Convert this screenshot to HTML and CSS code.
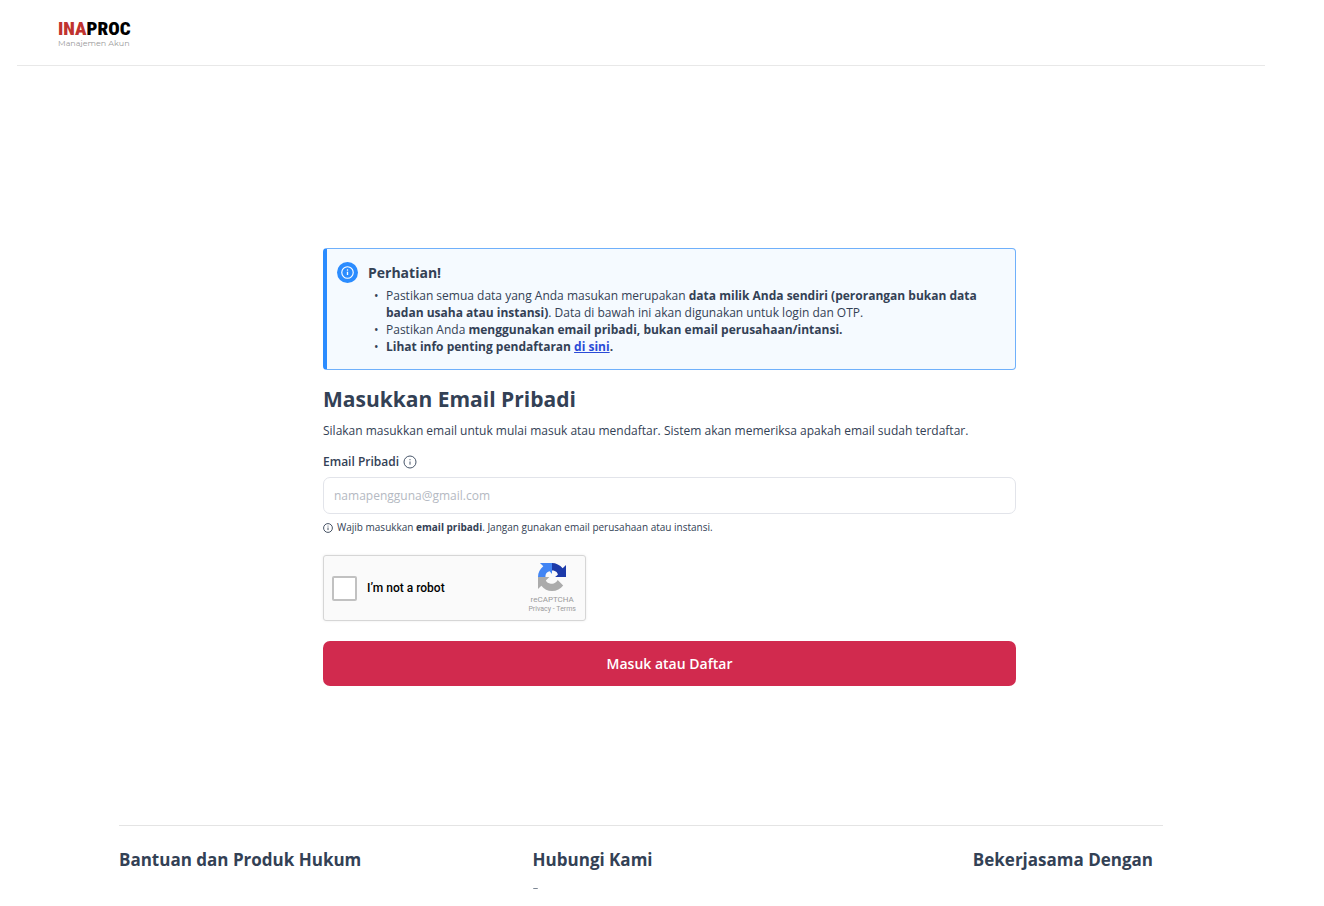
FILE: index.html
```html
<!DOCTYPE html>
<html lang="id">
<head>
<meta charset="utf-8">
<meta name="viewport" content="width=device-width, initial-scale=1">
<title>INAPROC Manajemen Akun</title>
<link rel="stylesheet" href="styles.css">
</head>
<body>
<div class="page">
  <header class="header">
    <div class="logo">
      <span class="logo-name"><span class="logo-red">INA</span>PROC</span>
      <span class="logo-sub">Manajemen Akun</span>
    </div>
  </header>

  <main class="main">
    <div class="content">
      <section class="notice">
        <svg class="notice-icon" viewBox="0 0 22 22" aria-hidden="true">
          <circle cx="11" cy="11" r="11" fill="#2b8cff"/>
          <circle cx="11" cy="11" r="6" fill="none" stroke="#fff" stroke-width="1.2"/>
          <path d="M11 10.2v3.4" stroke="#fff" stroke-width="1.4"/>
          <circle cx="11" cy="8.3" r=".8" fill="#fff"/>
        </svg>
        <div class="notice-body">
          <h2 class="notice-title">Perhatian!</h2>
          <ul class="notice-list">
            <li>Pastikan semua data yang Anda masukan merupakan <b>data milik Anda sendiri (perorangan bukan data badan usaha atau instansi)</b>. Data di bawah ini akan digunakan untuk login dan OTP.</li>
            <li>Pastikan Anda <b>menggunakan email pribadi, bukan email perusahaan/intansi.</b></li>
            <li><b>Lihat info penting pendaftaran <a class="link" href="#">di sini</a>.</b></li>
          </ul>
        </div>
      </section>

      <form class="form">
        <h1 class="title">Masukkan Email Pribadi</h1>
        <p class="lead">Silakan masukkan email untuk mulai masuk atau mendaftar. Sistem akan memeriksa apakah email sudah terdaftar.</p>

        <div class="label-row">
          <label class="label" for="email">Email Pribadi</label>
          <svg class="label-icon" viewBox="0 0 14 14" aria-hidden="true">
            <circle cx="7" cy="7" r="6" fill="none" stroke="#475569"/>
            <path d="M7 6.5v3.2" stroke="#475569"/>
            <circle cx="7" cy="4.7" r=".6" fill="#475569"/>
          </svg>
        </div>
        <input class="input" id="email" type="email" placeholder="namapengguna@gmail.com">
        <p class="hint">
          <svg class="hint-icon" viewBox="0 0 10 10" aria-hidden="true">
            <circle cx="5" cy="5" r="4.4" fill="none" stroke="#334155" stroke-width=".9"/>
            <path d="M5 4.5v2.6" stroke="#334155" stroke-width=".9"/>
            <circle cx="5" cy="3.1" r=".5" fill="#334155"/>
          </svg>
          <span>Wajib masukkan <b>email pribadi</b>. Jangan gunakan email perusahaan atau instansi.</span>
        </p>

        <div class="captcha">
          <input class="captcha-box" id="robot" type="checkbox">
          <label class="captcha-label" for="robot">I’m not a robot</label>
          <div class="captcha-brand">
            <svg class="captcha-logo" viewBox="0 0 64 64" aria-hidden="true">
              <path fill="#1c3aa9" d="M64 32V4.500l-7.600 7.600C50.200 4.600 41 0 32 0v17c5 0 8 1.200 10.400 3.600 1.600 1.600 2.600 3.500 3 6L39 32z"/>
              <path fill="#4285f4" d="M32 0H4.500l7.600 7.600C4.600 13.800 0 22 0 32h17c0-5 1.200-8 3.600-10.400 1.600-1.600 3.500-2.600 6-3L32 25z"/>
              <path fill="#ababab" d="M0 32v27.500l7.600-7.600C13.800 59.400 22 64 32 64c10.500 0 19.800-5 25.600-12.800L45 38.600c-1.200 2.300-3 4.200-5.100 5.700-2.200 1.700-5.300 3.100-9.600 3.100-.5 0-.9-.1-1.200-.2-5.300-.3-9.200-3-11.200-7L26 32z"/>
            </svg>
            <span class="captcha-name">reCAPTCHA</span>
            <span class="captcha-legal"><a href="#">Privacy</a> - <a href="#">Terms</a></span>
          </div>
        </div>

        <button class="submit" type="submit">Masuk atau Daftar</button>
      </form>
    </div>
  </main>

  <footer class="footer">
    <h3 class="footer-title">Bantuan dan Produk Hukum</h3>
    <div>
      <h3 class="footer-title">Hubungi Kami</h3>
      <div class="contact-peek"></div>
    </div>
    <h3 class="footer-title">Bekerjasama Dengan</h3>
  </footer>
</div>
</body>
</html>
```
FILE: styles.css
```css
* {
  box-sizing: border-box;
}

body {
  margin: 0;
  background: #fff;
  color: #334155;
  font-family: "Open Sans", "Noto Sans", sans-serif;
  font-size: 12px;
  line-height: 17px;
}

h1, h2, h3, p, ul {
  margin: 0;
  padding: 0;
}

.page {
  margin: 0 59px 0 17px;
}

.header {
  padding: 19px 41px 18px;
  border-bottom: 1px solid #e8e8e8;
}

.logo {
  display: inline-flex;
  flex-direction: column;
}

.logo-name {
  color: #000;
  font-family: "Roboto Condensed", Roboto, sans-serif;
  font-size: 19px;
  font-weight: 900;
  line-height: 20px;
}

.logo-red {
  color: #c0332f;
}

.logo-sub {
  color: #999;
  font-family: Montserrat, Inter, sans-serif;
  font-size: 8px;
  line-height: 8px;
  white-space: nowrap;
}

.main {
  padding: 182px 0 139px 57px;
}

.content {
  max-width: 693px;
  margin: 0 auto;
}

.notice {
  display: flex;
  gap: 10px;
  padding: 13px 20px 14px 10px;
  border: 1px solid #6fb0fb;
  border-left: 4px solid #2b8cff;
  border-radius: 4px;
  background: #f5faff;
}

.notice-icon {
  flex: none;
  width: 21px;
  height: 21px;
}

.notice-title {
  font-size: 14px;
  font-weight: 700;
  line-height: 21px;
}

.notice-list {
  margin-top: 4px;
  padding-left: 18px;
  list-style: none;
}

.notice-list li::before {
  content: "•";
  float: left;
  margin-left: -12px;
  font-size: 12px;
}

.link {
  color: #2a4bd7;
}

.form {
  display: flex;
  flex-direction: column;
}

.title {
  margin-top: 14px;
  font-size: 21px;
  font-weight: 700;
  line-height: 30px;
}

.lead {
  margin-top: 8px;
}

.label-row {
  display: flex;
  align-items: center;
  gap: 4px;
  margin-top: 14px;
}

.label {
  font-weight: 600;
}

.label-icon {
  width: 14px;
  height: 14px;
}

.input {
  height: 37px;
  margin-top: 7px;
  padding: 0 10px;
  border: 1px solid #e2e4ea;
  border-radius: 7px;
  background: #fff;
  color: #334155;
  font: inherit;
}

.input::placeholder {
  color: #b4b9c2;
  opacity: 1;
}

.hint {
  display: flex;
  align-items: center;
  gap: 4px;
  margin-top: 5px;
  font-size: 10px;
}

.hint-icon {
  width: 10px;
  height: 10px;
}

.captcha {
  display: flex;
  align-items: center;
  width: 263px;
  height: 66px;
  margin-top: 19px;
  padding: 0 9px 0 8px;
  border: 1px solid #d6d6d6;
  border-radius: 3px;
  background: #fafafa;
  box-shadow: 0 0 3px #00000014;
  color: #000;
  font-family: Roboto, sans-serif;
}

.captcha-box {
  flex: none;
  width: 25px;
  height: 25px;
  margin: 0;
  border: 2px solid #c1c1c1;
  border-radius: 2px;
  background: #fff;
  appearance: none;
}

.captcha-label {
  flex: 1;
  margin-left: 10px;
  font-weight: 500;
}

.captcha-brand {
  display: flex;
  flex-direction: column;
  align-items: center;
  color: #9b9b9b;
}

.captcha-logo {
  width: 28px;
  height: 28px;
  margin-bottom: 3px;
}

.captcha-name {
  font-size: 8px;
  line-height: 11px;
}

.captcha-legal {
  font-size: 7px;
  line-height: 9px;
}

.captcha-legal a {
  color: inherit;
  text-decoration: none;
}

.submit {
  height: 45px;
  margin-top: 20px;
  border: 0;
  border-radius: 7px;
  background: #d12a4e;
  color: #fff;
  font: inherit;
  font-size: 14px;
  font-weight: 600;
}

.footer {
  display: grid;
  grid-template-columns: 40% 1fr auto;
  margin: 0 102px;
  padding: 22px 10px 0 0;
  border-top: 1px solid #e4e4e4;
}

.footer-title {
  font-size: 17px;
  font-weight: 700;
  line-height: 24px;
}

.contact-peek {
  width: 5px;
  height: 1px;
  margin-top: 16px;
  border-radius: 2px 2px 0 0;
  background: #7d8795;
}
```
